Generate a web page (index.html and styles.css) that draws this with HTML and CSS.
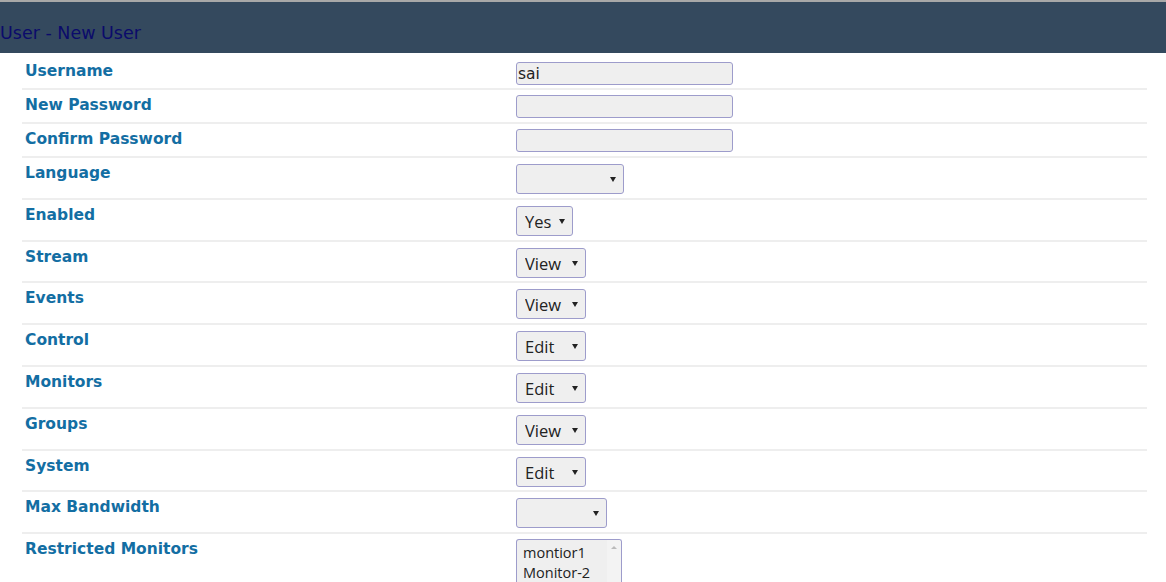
FILE: index.html
```html
<!DOCTYPE html>
<html>
<head>
<meta charset="utf-8">
<link rel="stylesheet" href="styles.css">
</head>
<body>
<div class="header"><h2 class="title">User - New User</h2></div>
<table class="form">
<tr><th>Username</th><td><input class="text" type="text" value="sai"></td></tr>
<tr><th>New Password</th><td><input class="text" type="password"></td></tr>
<tr><th>Confirm Password</th><td><input class="text" type="password"></td></tr>
<tr class="tall"><th>Language</th><td><span class="sel w-lang"><select><option></option></select></span></td></tr>
<tr class="tall"><th>Enabled</th><td><span class="sel w-yes"><select><option>Yes</option></select></span></td></tr>
<tr class="tall"><th>Stream</th><td><span class="sel w-view"><select><option>View</option></select></span></td></tr>
<tr class="tall"><th>Events</th><td><span class="sel w-view"><select><option>View</option></select></span></td></tr>
<tr class="tall"><th>Control</th><td><span class="sel w-view"><select><option>Edit</option></select></span></td></tr>
<tr class="tall"><th>Monitors</th><td><span class="sel w-view"><select><option>Edit</option></select></span></td></tr>
<tr class="tall"><th>Groups</th><td><span class="sel w-view"><select><option>View</option></select></span></td></tr>
<tr class="tall"><th>System</th><td><span class="sel w-view"><select><option>Edit</option></select></span></td></tr>
<tr class="tall"><th>Max Bandwidth</th><td><span class="sel w-bw"><select><option></option></select></span></td></tr>
<tr class="tall"><th>Restricted Monitors</th><td><div class="multi"><div class="opts"><div>montior1</div><div>Monitor-2</div></div><div class="sb"><span class="up"></span></div></div></td></tr>
</table>
</body>
</html>
```
FILE: styles.css
```css
html, body { margin: 0; padding: 0; background: #fff; }
body { font-family: "DejaVu Sans", Verdana, sans-serif; overflow: hidden; }
.header {
  background: #34495e;
  border-top: 2px solid #a8a8a8;
  height: 51px;
  display: flex;
  align-items: flex-end;
}
.title {
  margin: 0 0 9px 0;
  font-size: 17.5px;
  font-weight: normal;
  color: #0b0b6b;
  line-height: 22px;
}
.form {
  margin: 6px 0 0 22px;
  width: 1125px;
  border-collapse: collapse;
}
.form tr + tr th, .form tr + tr td { border-top: 2px solid #eeeeee; }
.form th {
  text-align: left;
  width: 485px;
  padding: 5px 3px 0 3px;
  font-size: 15.5px;
  font-weight: bold;
  color: #136ea3;
  vertical-align: top;
  height: 27px;
  line-height: 20px;
}
.form tr:first-child th { padding-top: 2px; }
.form td { padding: 5px 3px 0 3px; vertical-align: top; }
.form tr:first-child td { padding-top: 3px; }
.form tr.tall th { height: 34.8px; }
.form tr.tall td { padding-top: 4px; }
.text {
  box-sizing: border-box;
  width: 217px;
  height: 23px;
  margin: 0;
  padding: 0 1px;
  background: #efefef;
  border: 1px solid #9d9ccb;
  border-radius: 3px;
  font-family: "DejaVu Sans", Verdana, sans-serif;
  font-size: 15.5px;
  color: #222;
  outline: none;
}
.sel { position: relative; display: inline-block; margin-top: 2px; }
.sel select {
  -webkit-appearance: none;
  appearance: none;
  box-sizing: border-box;
  width: 100%;
  height: 30px;
  margin: 0;
  padding: 1px 0 0 8px;
  background: #efefef;
  border: 1px solid #9d9ccb;
  border-radius: 3px;
  font-family: "Open Sans", sans-serif;
  font-size: 16.5px;
  color: #222;
  outline: none;
  display: block;
}
.sel::after {
  content: "";
  position: absolute;
  right: 8px;
  top: 13px;
  border-left: 3px solid transparent;
  border-right: 3px solid transparent;
  border-top: 5px solid #222;
  pointer-events: none;
}
.w-lang { width: 108px; }
.w-yes { width: 57px; }
.w-view { width: 70px; }
.w-bw { width: 91px; }
.multi {
  box-sizing: border-box;
  width: 106px;
  height: 50px;
  margin-top: 1px;
  display: flex;
  background: #efefef;
  border: 1px solid #9d9ccb;
  border-bottom: 0;
  border-radius: 3px 3px 0 0;
  overflow: hidden;
}
.opts {
  flex: 1;
  padding: 3px 0 0 6px;
  font-family: "Open Sans", sans-serif;
  font-size: 14.5px;
  line-height: 20px;
  color: #222;
}
.sb { width: 14px; background: #f3f3f3; position: relative; }
.up {
  position: absolute;
  left: 4px;
  top: 6px;
  border-left: 3px solid transparent;
  border-right: 3px solid transparent;
  border-bottom: 3px solid #bbb;
}
```
